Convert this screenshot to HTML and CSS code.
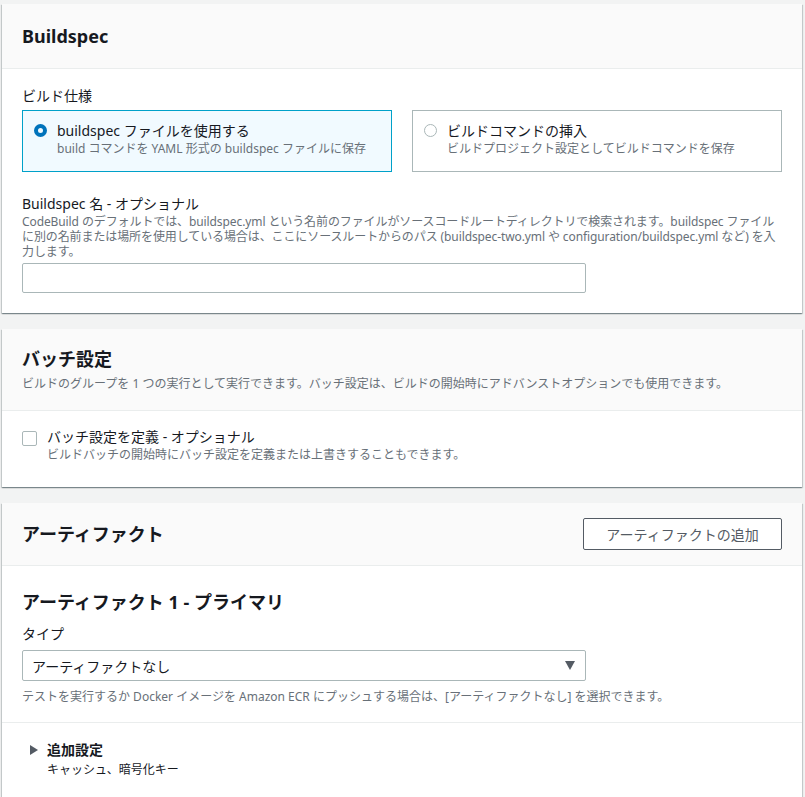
FILE: index.html
```html
<!DOCTYPE html>
<html lang="ja">
<head>
    <meta charset="UTF-8">
    <title>CodeBuild プロジェクト</title>
    <link rel="stylesheet" href="styles.css">
</head>
<body>
    <div class="container">
        <div class="container-header">
            <h2 class="title">Buildspec</h2>
        </div>
        <div class="container-body">
            <div class="label">ビルド仕様</div>
            <div class="tiles">
                <div class="tile selected">
                    <span class="radio checked"></span>
                    <div>
                        <div class="tile-title">buildspec ファイルを使用する</div>
                        <div class="desc">build コマンドを YAML 形式の buildspec ファイルに保存</div>
                    </div>
                </div>
                <div class="tile">
                    <span class="radio"></span>
                    <div>
                        <div class="tile-title">ビルドコマンドの挿入</div>
                        <div class="desc">ビルドプロジェクト設定としてビルドコマンドを保存</div>
                    </div>
                </div>
            </div>
            <div class="field">
                <div class="label">Buildspec 名 - オプショナル</div>
                <div class="desc long">CodeBuild のデフォルトでは、buildspec.yml という名前のファイルがソースコードルートディレクトリで検索されます。buildspec ファイルに別の名前または場所を使用している場合は、ここにソースルートからのパス (buildspec-two.yml や configuration/buildspec.yml など) を入力します。</div>
                <input class="input" type="text">
            </div>
        </div>
    </div>

    <div class="container">
        <div class="container-header tall">
            <h2 class="title">バッチ設定</h2>
            <div class="desc header-desc">ビルドのグループを 1 つの実行として実行できます。バッチ設定は、ビルドの開始時にアドバンストオプションでも使用できます。</div>
        </div>
        <div class="container-body check-body">
            <div class="check-row">
                <span class="checkbox"></span>
                <div>
                    <div class="check-label">バッチ設定を定義 - オプショナル</div>
                    <div class="desc">ビルドバッチの開始時にバッチ設定を定義または上書きすることもできます。</div>
                </div>
            </div>
        </div>
    </div>

    <div class="container">
        <div class="container-header row">
            <h2 class="title">アーティファクト</h2>
            <button class="btn">アーティファクトの追加</button>
        </div>
        <div class="container-body artifact-body">
            <h3 class="title sub">アーティファクト 1 - プライマリ</h3>
            <div class="label">タイプ</div>
            <div class="select">
                <span>アーティファクトなし</span>
                <span class="caret"></span>
            </div>
            <div class="desc select-desc">テストを実行するか Docker イメージを Amazon ECR にプッシュする場合は、[アーティファクトなし] を選択できます。</div>
        </div>
        <div class="expander">
            <div class="expander-title"><span class="arrow"></span>追加設定</div>
            <div class="expander-desc">キャッシュ、暗号化キー</div>
        </div>
    </div>
</body>
</html>
```

FILE: styles.css
```css
body {
    margin: 0;
    padding: 4px 3px 0 2px;
    background-color: #f2f3f3;
    font-family: "Noto Sans", "Noto Sans CJK JP", sans-serif;
    color: #16191f;
    font-size: 14px;
}

.container {
    background-color: #fff;
    margin-bottom: 16px;
    box-shadow: 0 1px 1px 0 rgba(0, 28, 36, .3), 1px 1px 1px 0 rgba(0, 28, 36, .15), -1px 1px 1px 0 rgba(0, 28, 36, .15);
}

.container-header {
    background-color: #fafafa;
    border-bottom: 1px solid #eaeded;
    padding: 20px 20px 20px;
}

.container-header.tall {
    padding: 18px 20px 18px;
}

.container-header.row {
    display: flex;
    justify-content: space-between;
    align-items: center;
    padding: 15px 20px 15px;
}

.title {
    margin: 0;
    font-size: 18px;
    font-weight: bold;
    line-height: 24px;
}

.container-body {
    padding: 17px 20px 20px;
}

.label {
    line-height: 20px;
}

.desc {
    font-size: 12px;
    line-height: 16px;
    color: #687078;
}

.tiles {
    display: flex;
    gap: 20px;
    margin-top: 4px;
}

.tile {
    flex: 1;
    display: flex;
    align-items: flex-start;
    gap: 10px;
    padding: 10px 14px 14px 11px;
    border: 1px solid #aab7b8;
}

.tile.selected {
    border-color: #00a1c9;
    background-color: #f1faff;
}

.tile-title {
    line-height: 20px;
}

.radio {
    width: 13px;
    height: 13px;
    margin-top: 3px;
    border: 1px solid #aab7b8;
    border-radius: 50%;
    box-sizing: border-box;
    flex-shrink: 0;
}

.radio.checked {
    border: 4px solid #0073bb;
}

.field {
    margin-top: 22px;
}

.desc.long {
    line-height: 15px;
    letter-spacing: -0.1px;
}

.input {
    display: block;
    margin-top: 4px;
    width: 564px;
    height: 30px;
    box-sizing: border-box;
    border: 1px solid #aab7b8;
    border-radius: 2px;
}

.header-desc {
    margin-top: 5px;
}

.check-body {
    padding: 16px 20px 24px;
}

.check-row {
    display: flex;
    align-items: flex-start;
    gap: 10px;
}

.checkbox {
    width: 13px;
    height: 13px;
    margin-top: 4px;
    border: 1px solid #aab7b8;
    border-radius: 2px;
    flex-shrink: 0;
}

.check-label {
    line-height: 20px;
}

.btn {
    font-family: inherit;
    font-size: 14px;
    color: #545b64;
    background-color: #fff;
    border: 1px solid #545b64;
    border-radius: 2px;
    width: 199px;
    height: 32px;
}

.artifact-body {
    padding: 24px 20px 17px;
    border-bottom: 1px solid #eaeded;
}

.title.sub {
    margin-bottom: 10px;
}

.select {
    display: flex;
    justify-content: space-between;
    align-items: center;
    margin-top: 6px;
    width: 564px;
    height: 31px;
    box-sizing: border-box;
    padding: 0 10px 0 9px;
    border: 1px solid #aab7b8;
    border-radius: 2px;
}

.caret {
    width: 0;
    height: 0;
    border-left: 5px solid transparent;
    border-right: 5px solid transparent;
    border-top: 9px solid #545b64;
}

.select-desc {
    margin-top: 8px;
}

.expander {
    padding: 17px 20px 20px 28px;
}

.expander-title {
    display: flex;
    align-items: center;
    line-height: 20px;
    font-weight: bold;
    color: #16191f;
}

.arrow {
    width: 0;
    height: 0;
    border-top: 5px solid transparent;
    border-bottom: 5px solid transparent;
    border-left: 8px solid #545b64;
    margin-right: 9px;
}

.expander-desc {
    font-size: 12px;
    line-height: 16px;
    margin-top: 2px;
    padding-left: 17px;
    color: #16191f;
}
```
